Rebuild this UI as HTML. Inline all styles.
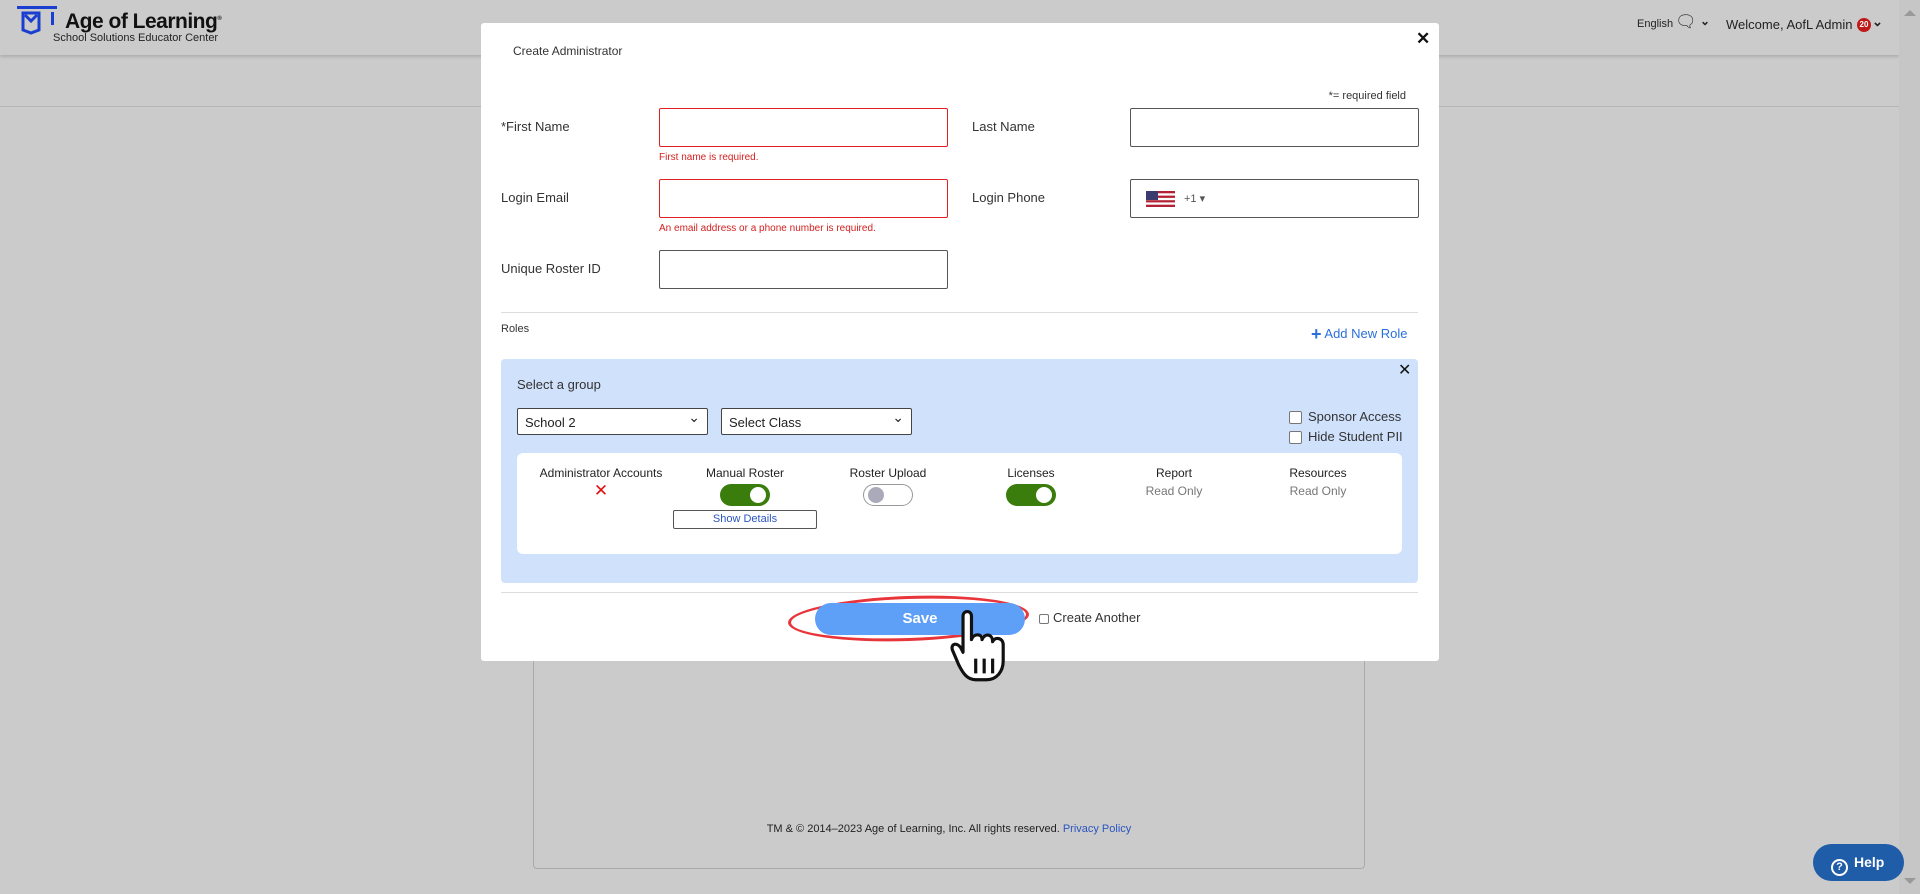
<!DOCTYPE html>
<html><head><style>
*{box-sizing:border-box;margin:0;padding:0}
body{width:1920px;height:894px;background:#cbcbcb;font-family:"Liberation Sans",sans-serif;position:relative;overflow:hidden;color:#222}
.a{position:absolute}
.lbl{font-size:13px;color:#333}
.inp{position:absolute;border:1px solid #555;border-radius:2px;background:#fff;height:39px;width:289px}
.err{border-color:#e02020}
.etxt{font-size:10px;color:#d42020}
.col{position:absolute;top:466px;width:140px;text-align:center;font-size:12px;color:#222}
.tg{display:inline-block;width:50px;height:22px;border-radius:11px;position:relative;margin-top:4px}
.tg.on{background:#3b7d0c}
.tg.off{background:#fff;border:1px solid #999}
.tg i{position:absolute;top:3px;width:16px;height:16px;border-radius:50%}
.tg.on i{right:4px;background:#fff}
.tg.off i{left:4px;top:2px;background:#aab}
.ro{font-size:12px;color:#777;margin-top:4px}
.cb{display:inline-block;width:13px;height:13px;border:1px solid #777;background:#fff;border-radius:2px;vertical-align:middle;margin-right:6px}
.sel{position:absolute;top:408px;height:27px;width:191px;border:1px solid #444;border-radius:2px;background:#fff;font-size:13px;padding:6px 7px}
.sel:after{content:"⌄";position:absolute;right:7px;top:0px;font-size:14px}
</style></head><body>
<div class="a" style="left:0;top:0;width:1899px;height:55px;background:#cbcbcb;box-shadow:0 2px 3px rgba(0,0,0,.15)"></div>
<div class="a" style="left:0;top:106px;width:1899px;height:1px;background:#b5b5b5"></div>
<svg class="a" style="left:17px;top:6px" width="42" height="30" viewBox="0 0 42 30"><rect x="0" y="0" width="40" height="3" fill="#1a3fd0"/><path d="M6 7 H22 V24 L14 27 L6 24 Z" fill="none" stroke="#1a3fd0" stroke-width="3"/><path d="M8 9 L14 15 L20 9" fill="none" stroke="#1a3fd0" stroke-width="3"/><rect x="34" y="6" width="3" height="13" fill="#1a3fd0"/></svg>
<div class="a" style="left:65px;top:8px;font-size:21px;line-height:22px;font-weight:bold;color:#111;letter-spacing:-0.5px">Age of Learning<sup style="font-size:6px">®</sup></div>
<div class="a" style="left:53px;top:32px;font-size:11px;line-height:12px;color:#222">School Solutions Educator Center</div>
<div class="a" style="left:1637px;top:18px;font-size:11px;color:#222">English</div>
<div class="a" style="left:1675px;top:12px;font-size:17px">🗨</div>
<div class="a" style="left:1700px;top:14px;font-size:12px;font-weight:bold">⌄</div>
<div class="a" style="left:1726px;top:17px;font-size:13px;color:#222">Welcome, AofL Admin</div>
<div class="a" style="left:1857px;top:18px;width:14px;height:14px;border-radius:50%;background:#c0191a;color:#fff;font-size:8px;font-weight:bold;text-align:center;line-height:14px">20</div>
<div class="a" style="left:1872px;top:14px;font-size:13px;font-weight:bold">⌄</div>
<div class="a" style="left:1899px;top:0;width:21px;height:894px;background:#c6c6c6"></div>
<div class="a" style="left:1904px;top:10px;width:0;height:0;border-left:6px solid transparent;border-right:6px solid transparent;border-bottom:6px solid #999"></div>
<div class="a" style="left:1904px;top:878px;width:0;height:0;border-left:6px solid transparent;border-right:6px solid transparent;border-top:6px solid #999"></div>
<div class="a" style="left:533px;top:640px;width:832px;height:229px;border:1px solid #aaa;border-radius:4px;background:#cbcbcb"></div>
<div class="a" style="left:533px;top:823px;width:832px;text-align:center;font-size:11px;color:#222">TM &amp; © 2014–2023 Age of Learning, Inc. All rights reserved. <span style="color:#2a55c0">Privacy Policy</span></div>
<div class="a" style="left:1813px;top:844px;width:91px;height:37px;border-radius:19px;background:#1f5da8;color:#fff;font-size:14px;font-weight:bold;line-height:37px;padding-left:18px"><span style="display:inline-block;width:17px;height:17px;border:2px solid #fff;border-radius:50%;font-size:11px;line-height:13px;text-align:center;vertical-align:-3px;margin-right:6px">?</span>Help</div>
<div class="a" style="left:481px;top:23px;width:958px;height:638px;background:#fff;border-radius:3px"></div>
<div class="a lbl" style="left:513px;top:44px;font-size:12px">Create Administrator</div>
<div class="a" style="left:1416px;top:29px;font-size:17px;color:#111;font-weight:bold">✕</div>
<div class="a" style="left:1300px;top:90px;width:106px;text-align:right;font-size:11px;color:#333">*= required field</div>
<div class="a lbl" style="left:501px;top:119px">*First Name</div>
<div class="inp err" style="left:659px;top:108px"></div>
<div class="a etxt" style="left:659px;top:152px">First name is required.</div>
<div class="a lbl" style="left:972px;top:119px">Last Name</div>
<div class="inp" style="left:1130px;top:108px"></div>
<div class="a lbl" style="left:501px;top:190px">Login Email</div>
<div class="inp err" style="left:659px;top:179px"></div>
<div class="a etxt" style="left:659px;top:223px">An email address or a phone number is required.</div>
<div class="a lbl" style="left:972px;top:190px">Login Phone</div>
<div class="inp" style="left:1130px;top:179px"></div>
<svg class="a" style="left:1146px;top:191px" width="29" height="16" viewBox="0 0 29 16"><rect width="29" height="16" fill="#b22234"/><g fill="#fff"><rect y="2.3" width="29" height="2.3"/><rect y="6.9" width="29" height="2.3"/><rect y="11.4" width="29" height="2.3"/></g><rect width="12" height="9" fill="#3c3b6e"/></svg>
<div class="a" style="left:1184px;top:192px;font-size:11px;color:#555">+1 ▾</div>
<div class="a lbl" style="left:501px;top:261px">Unique Roster ID</div>
<div class="inp" style="left:659px;top:250px"></div>
<div class="a" style="left:501px;top:312px;width:917px;height:1px;background:#ddd"></div>
<div class="a" style="left:501px;top:323px;font-size:11px;color:#333">Roles</div>
<div class="a" style="left:1311px;top:324px;font-size:13px;color:#2a6fdc"><b style="font-size:18px;vertical-align:-2px">+</b> Add New Role</div>
<div class="a" style="left:501px;top:359px;width:917px;height:224px;background:#cfe1fb;border-radius:4px"></div>
<div class="a" style="left:1398px;top:360px;font-size:16px;color:#111">✕</div>
<div class="a lbl" style="left:517px;top:377px">Select a group</div>
<div class="sel" style="left:517px">School 2</div>
<div class="sel" style="left:721px">Select Class</div>
<div class="a lbl" style="left:1289px;top:409px"><span class="cb"></span>Sponsor Access</div>
<div class="a lbl" style="left:1289px;top:429px"><span class="cb"></span>Hide Student PII</div>
<div class="a" style="left:517px;top:453px;width:885px;height:101px;background:#fff;border-radius:6px"></div>
<div class="col" style="left:531px">Administrator Accounts<div style="color:#e01010;font-size:17px;margin-top:1px">✕</div></div>
<div class="col" style="left:675px">Manual Roster<br><span class="tg on"><i></i></span></div>
<div class="col" style="left:818px">Roster Upload<br><span class="tg off"><i></i></span></div>
<div class="col" style="left:961px">Licenses<br><span class="tg on"><i></i></span></div>
<div class="col" style="left:1104px">Report<div class="ro">Read Only</div></div>
<div class="col" style="left:1248px">Resources<div class="ro">Read Only</div></div>
<div class="a" style="left:673px;top:510px;width:144px;height:19px;border:1px solid #555;border-radius:2px;text-align:center;font-size:11px;color:#2a55c0;line-height:17px">Show Details</div>
<div class="a" style="left:501px;top:592px;width:917px;height:1px;background:#ddd"></div>
<div class="a" style="left:788px;top:596px;width:241px;height:45px;border:3px solid #e8353a;border-radius:50%;transform:rotate(-2deg)"></div>
<div class="a" style="left:815px;top:603px;width:210px;height:32px;border-radius:16px;background:#5e9ff8;color:#fff;font-size:15px;font-weight:bold;text-align:center;line-height:32px">Save</div>
<div class="a lbl" style="left:1039px;top:610px"><span class="cb" style="width:10px;height:10px;margin-right:4px"></span>Create Another</div>
<svg class="a" style="left:950px;top:610px" width="62" height="74" viewBox="0 0 58 70"><path d="M12 6 C12 0 20 0 20 6 L20 28 C22 22 30 22 30 28 C32 22 40 22 40 30 C42 25 50 26 50 33 L50 48 C50 58 44 66 34 66 L24 66 C16 66 12 60 8 52 L2 38 C0 32 6 30 10 36 L12 40 Z" fill="#fff" stroke="#111" stroke-width="3" stroke-linejoin="round"/><path d="M24 46 V60 M32 46 V60 M40 46 V60" stroke="#111" stroke-width="3"/></svg>
</body></html>
